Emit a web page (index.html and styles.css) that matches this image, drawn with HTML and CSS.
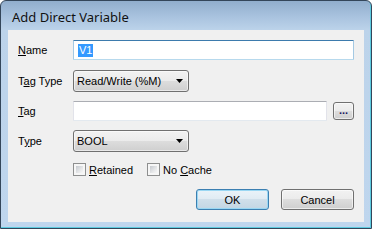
FILE: index.html
```html
<!DOCTYPE html>
<html>
<head>
<meta charset="utf-8">
<link rel="stylesheet" href="styles.css">
</head>
<body>
<div class="window">
  <div class="titlebar"><span class="title">Add Direct Variable</span></div>
  <div class="client">
    <div class="row r-name">
      <span class="lbl"><u>N</u>ame</span>
      <div class="textbox focused grow"><span class="sel">V1</span></div>
    </div>
    <div class="row r-tagtype">
      <span class="lbl">T<u>a</u>g Type</span>
      <div class="combo"><span>Read/Write (%M)</span><svg class="arrow" width="7" height="4" viewBox="0 0 7 4"><path d="M0 0H7L3.5 4Z" fill="#000"/></svg></div>
    </div>
    <div class="row r-tag">
      <span class="lbl"><u>T</u>ag</span>
      <div class="textbox grow"></div>
      <div class="btn browse">...</div>
    </div>
    <div class="row r-type">
      <span class="lbl">T<u>y</u>pe</span>
      <div class="combo"><span>BOOL</span><svg class="arrow" width="7" height="4" viewBox="0 0 7 4"><path d="M0 0H7L3.5 4Z" fill="#000"/></svg></div>
    </div>
    <div class="row r-checks">
      <span class="lbl"></span>
      <span class="check first"><span class="box"></span><span><u>R</u>etained</span></span>
      <span class="check"><span class="box"></span><span>No <u>C</u>ache</span></span>
    </div>
    <div class="row r-buttons">
      <div class="btn push default">OK</div>
      <div class="btn push">Cancel</div>
    </div>
  </div>
</div>
</body>
</html>
```

FILE: styles.css
```css
html, body {
  margin: 0;
  padding: 0;
  background: #ffffff;
}

.window {
  width: 372px;
  height: 229px;
  box-sizing: border-box;
  border: 1px solid #34465a;
  border-radius: 6px 6px 0 0;
  background: linear-gradient(to bottom, #91aecd 0px, #a9c3df 16px, #bcd3ea 29px, #bfd6ee 100%);
  box-shadow: inset -1px -1px 0 #5ccbe0;
  padding: 0 7px 6px 7px;
  display: flex;
  flex-direction: column;
  font-family: "Liberation Sans", Arial, sans-serif;
  font-size: 11px;
  color: #000;
}

.titlebar {
  height: 29px;
  box-sizing: border-box;
  padding: 8px 0 0 4px;
  font-family: "Noto Sans", "Open Sans", sans-serif;
  font-size: 13px;
  line-height: 16px;
  color: #111;
  white-space: nowrap;
}

.client {
  flex: 1;
  background: #f0f0f0;
  padding: 10px 10px 0 10px;
  display: flex;
  flex-direction: column;
}

.row {
  display: flex;
  align-items: center;
}

.r-name { height: 20px; }
.r-tagtype { height: 22px; margin-top: 10px; }
.r-tag { height: 20px; margin-top: 9px; }
.r-type { height: 22px; margin-top: 9px; }
.r-checks { height: 13px; margin-top: 11px; }
.r-buttons { height: 21px; margin-top: 13px; justify-content: flex-end; gap: 12px; }

.lbl {
  width: 55px;
  flex: none;
  white-space: nowrap;
}

.grow { flex: 1; }

.textbox {
  height: 20px;
  box-sizing: border-box;
  border: 1px solid;
  border-color: #abadb3 #e2e3ea #e3e9ef #e2e3ea;
  border-radius: 1px;
  background: #fff;
  display: flex;
  align-items: center;
  padding-left: 4px;
}

.textbox.focused {
  border-color: #3d7bad #a4c9e3 #b7d9ed #a4c9e3;
}

.sel {
  background: #3399ff;
  color: #fff;
  line-height: 13px;
  padding: 0 1px;
}

.combo {
  width: 116px;
  height: 22px;
  box-sizing: border-box;
  border: 1px solid #707070;
  border-radius: 3px;
  background: linear-gradient(to bottom, #f2f2f2 0%, #ebebeb 50%, #dddddd 50%, #cfcfcf 100%);
  box-shadow: inset 0 0 0 1px rgba(255, 255, 255, 0.55);
  display: flex;
  align-items: center;
  justify-content: space-between;
  padding: 0 5px 0 3px;
}

.arrow { display: block; }

.btn {
  box-sizing: border-box;
  border: 1px solid #707070;
  border-radius: 3px;
  background: linear-gradient(to bottom, #f2f2f2 0%, #ebebeb 50%, #dddddd 50%, #cfcfcf 100%);
  box-shadow: inset 0 0 0 1px rgba(255, 255, 255, 0.6);
  display: flex;
  align-items: center;
  justify-content: center;
}

.browse {
  width: 21px;
  height: 18px;
  margin-left: 6px;
  font-size: 11px;
  font-weight: bold;
  line-height: 10px;
  padding-bottom: 3px;
  color: #1a1a60;
}

.push {
  width: 73px;
  height: 21px;
}

.default {
  border-color: #3c7fb1;
  background: linear-gradient(to bottom, #eaf3f9 0%, #e0ebf3 50%, #d0dfea 50%, #c3d6e4 100%);
  box-shadow: inset 0 0 0 1px #9ad7f3;
}

.check {
  display: flex;
  align-items: center;
  gap: 3px;
  white-space: nowrap;
}

.check.first { width: 74px; }

.box {
  width: 13px;
  height: 13px;
  box-sizing: border-box;
  border: 1px solid #8e8f8f;
  padding: 2px;
  background: linear-gradient(135deg, #c5c9ce 0%, #e6e7e9 60%, #f7f7f7 100%) content-box, #f6f6f6;
  flex: none;
}
```
